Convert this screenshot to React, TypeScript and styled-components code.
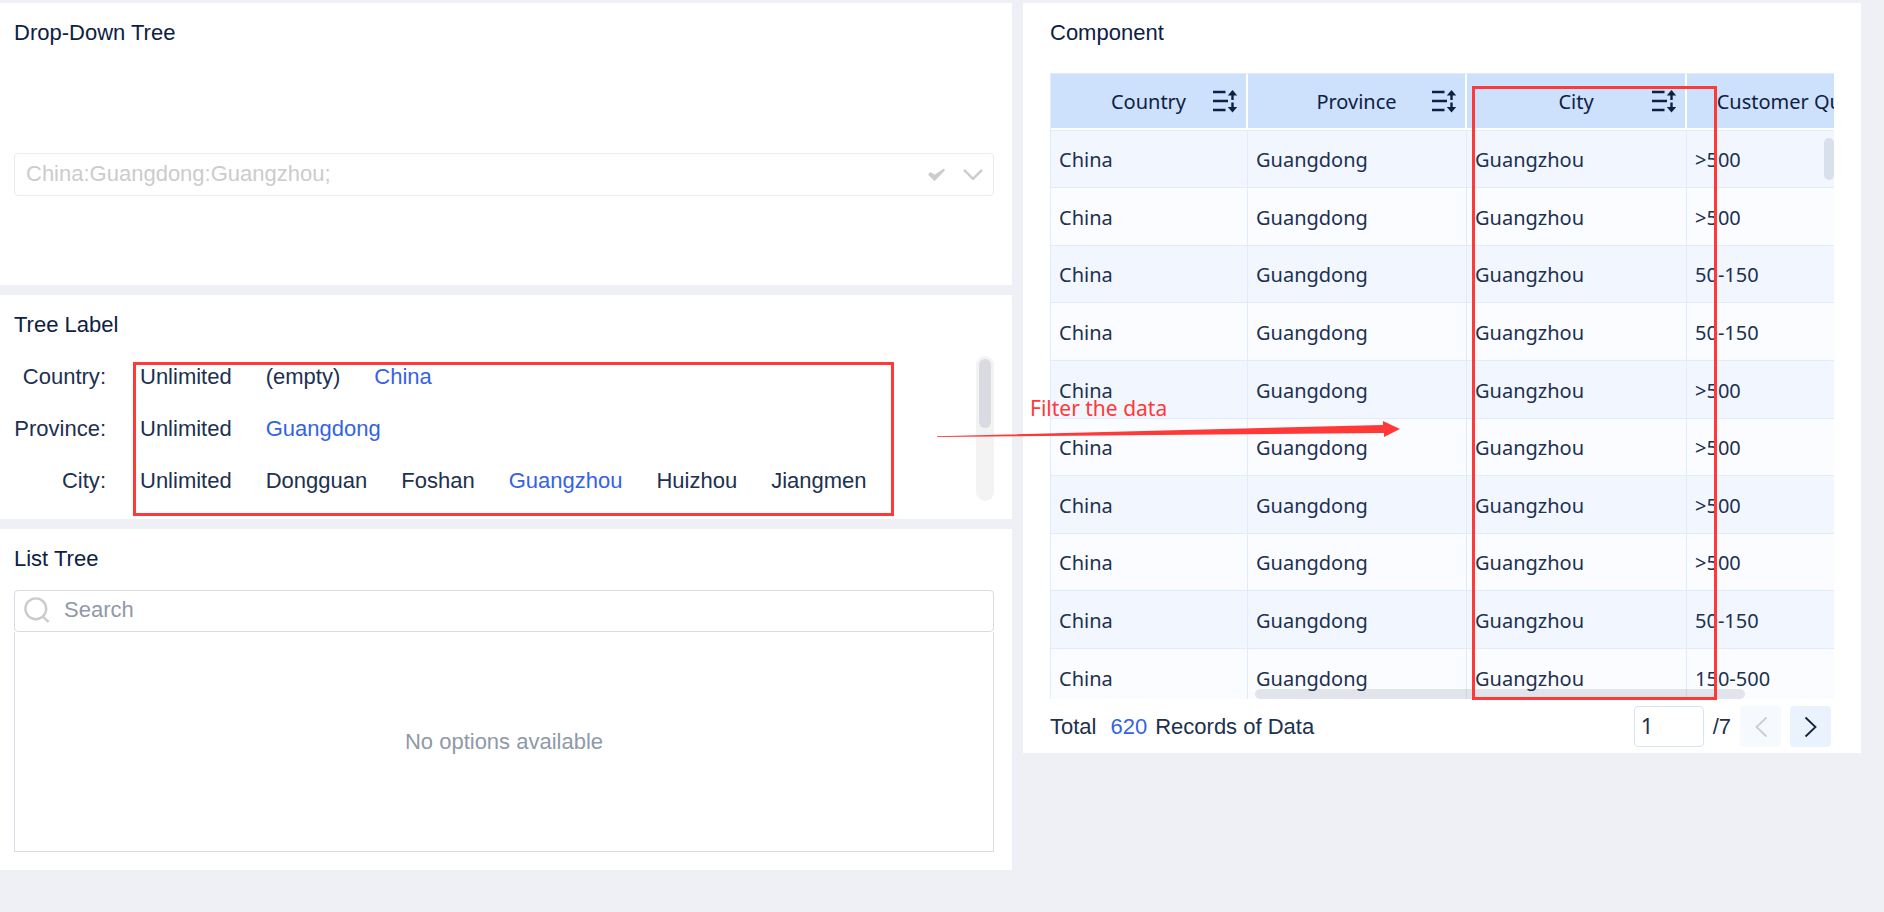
import React, { useState } from "react";
import styled, { createGlobalStyle } from "styled-components";

const sans = `"Liberation Sans", Arial, sans-serif`;
const humanist = `"Noto Sans", "Segoe UI", sans-serif`;

const ink = "#0d2144";
const softInk = "#20304f";
const blue = "#3463e4";
const red = "#ff3838";
const line = "#e0ebfc";
const frame = "#d9dce4";

const GlobalStyle = createGlobalStyle`
  *, *::before, *::after { box-sizing: border-box; }
  body {
    margin: 0;
    background: #eff0f5;
    color: ${softInk};
    font: 22px/26px ${sans};
  }
  button, input, select { font: inherit; color: inherit; }
`;

const Page = styled.main`
  display: grid;
  grid-template-columns: 1012fr 838fr;
  align-items: start;
  gap: 11px;
  padding: 3px 23px 24px 0;
`;

const Column = styled.div`
  display: flex;
  flex-direction: column;
  gap: 10px;
  min-width: 0;
`;

const Panel = styled.section<{ $minHeight: number; $flush?: boolean }>`
  display: flex;
  flex-direction: column;
  min-height: ${(p) => p.$minHeight}px;
  padding: 16px 18px ${(p) => (p.$flush ? 0 : 18)}px 14px;
  background: #fff;
`;

const TablePanel = styled.section`
  position: relative;
  min-width: 0;
  padding: 16px 27px 6px;
  background: #fff;
`;

const Title = styled.h2<{ $gap?: number }>`
  margin: 0 0 ${(p) => p.$gap ?? 18}px;
  color: ${ink};
  font-size: 22px;
  font-weight: 400;
  line-height: 27px;
`;

const Centered = styled.div`
  flex: 1;
  display: flex;
  align-items: center;
`;

const Combo = styled.div`
  flex: 1;
  display: flex;
  align-items: center;
  gap: 15px;
  height: 43px;
  padding: 0 9px 0 11px;
  border: 1px solid #ebecef;
  border-radius: 4px;
  color: #ccc;
`;

const ComboSelect = styled.select`
  flex: 1;
  min-width: 0;
  height: 30px;
  padding: 0 0 2px;
  border: 0;
  outline: 0;
  appearance: none;
  background: transparent;
  color: #ccc;
  opacity: 1;
`;

const TreeBody = styled.div`
  position: relative;
  display: flex;
  justify-content: space-between;
  height: 145px;
`;

const TreeRows = styled.div`
  display: flex;
  flex-direction: column;
  gap: 10px;
`;

const TreeRow = styled.div`
  display: flex;
  gap: 34px;
  line-height: 42px;
`;

const TreeName = styled.span`
  width: 92px;
  text-align: right;
  white-space: nowrap;
`;

const TreeOptions = styled.div`
  display: flex;
  gap: 34px;
`;

const TreeOption = styled.button<{ $active: boolean }>`
  padding: 0;
  border: 0;
  background: none;
  color: ${(p) => (p.$active ? blue : softInk)};
  line-height: 42px;
  white-space: nowrap;
  cursor: pointer;
`;

const Track = styled.div`
  width: 18px;
  padding: 3px;
  border-radius: 9px;
  background: #f3f3f3;
`;

const Thumb = styled.div`
  height: 69px;
  border-radius: 6px;
  background: #d9dbe0;
`;

const Highlight = styled.div<{ $left: number; $top: number; $width: number; $height: number }>`
  position: absolute;
  left: ${(p) => p.$left}px;
  top: ${(p) => p.$top}px;
  width: ${(p) => p.$width}px;
  height: ${(p) => p.$height}px;
  border: 3px solid ${red};
  pointer-events: none;
`;

const SearchBox = styled.label`
  display: flex;
  align-items: center;
  gap: 14px;
  height: 42px;
  padding: 0 9px 2px;
  border: 1px solid ${frame};
  border-radius: 4px;
  color: #ccc;
`;

const SearchInput = styled.input`
  flex: 1;
  min-width: 0;
  padding: 0;
  border: 0;
  outline: 0;
  background: none;
  color: ${softInk};
  &::placeholder { color: #8f99a8; opacity: 1; }
`;

const EmptyList = styled.div`
  flex: 1;
  display: flex;
  align-items: center;
  justify-content: center;
  border: 1px solid ${frame};
  border-top: 0;
  color: #8f99a8;
`;

const TableArea = styled.div`
  position: relative;
`;

const Viewport = styled.div`
  position: relative;
  height: 626px;
  overflow: hidden;
`;

const DataTable = styled.table`
  width: 877px;
  table-layout: fixed;
  border-spacing: 0;
  border-top: 1px solid ${line};
  border-left: 1px solid ${line};
  font: 20px/28px ${humanist};
`;

const HeadCell = styled.th`
  height: 56px;
  padding: 2px 0 0;
  border-right: 2px solid #fff;
  border-bottom: 2px solid #fff;
  background: #cde0fc;
  color: ${ink};
  font-weight: 400;
  white-space: nowrap;
`;

const HeadLayout = styled.div`
  display: grid;
  grid-template-columns: minmax(0, 1fr) auto minmax(0, 1fr);
  align-items: center;
`;

const SortButton = styled.button`
  grid-column: 3;
  justify-self: end;
  display: flex;
  margin-right: 8px;
  padding: 0 0 3px;
  border: 0;
  background: none;
  cursor: pointer;
`;

const HeadLabel = styled.span`
  grid-column: 2;
`;

const BodyRow = styled.tr`
  height: 58px;
  background: #fbfcff;
  &:nth-child(odd) { background: #f2f7ff; }
  &:nth-child(5n + 1), &:nth-child(5n + 3) { height: 57px; }
`;

const Cell = styled.td`
  padding: 2px 8px 0;
  border-top: 1px solid ${line};
  border-right: 1px solid ${line};
`;

const VerticalThumb = styled.div`
  position: absolute;
  top: 65px;
  right: 0;
  width: 10px;
  height: 42px;
  border-radius: 5px;
  background: rgba(20, 35, 70, 0.11);
`;

const HorizontalThumb = styled.div`
  position: absolute;
  bottom: 0;
  left: 205px;
  width: 490px;
  height: 10px;
  border-radius: 5px;
  background: rgba(20, 35, 70, 0.11);
`;

const Footer = styled.div`
  display: flex;
  align-items: center;
  justify-content: space-between;
  margin-top: 7px;
  padding-right: 3px;
`;

const Total = styled.div`
  display: flex;
  gap: 8px;
  white-space: nowrap;
`;

const Count = styled.span`
  padding-left: 6px;
  color: ${blue};
`;

const Pager = styled.div`
  display: flex;
  align-items: center;
  gap: 9px;
`;

const PageInput = styled.input`
  width: 70px;
  height: 41px;
  padding: 0 6px 3px;
  border: 1px solid #d5e4fb;
  border-radius: 4px;
  outline: 0;
  background: #fff;
  font-family: ${humanist};
`;

const PageButton = styled.button`
  display: grid;
  place-items: center;
  width: 41px;
  height: 41px;
  padding: 0;
  border: 0;
  border-radius: 4px;
  background: #eaf2fe;
  color: ${ink};
  &:disabled { background: #f6f9fe; color: #ccc; }
`;

const ArrowDrawing = styled.svg`
  position: absolute;
  left: -86px;
  top: 418px;
  pointer-events: none;
`;

const Note = styled.span`
  position: absolute;
  left: 7px;
  top: 391px;
  color: ${red};
  font: 21px/28px ${humanist};
  white-space: nowrap;
`;

const CheckIcon = () => (
  <svg width="20" height="16" viewBox="0 0 20 16" aria-hidden="true">
    <path d="M1 7.400 3.800 5l3.700 2.800L16.800 1.500l1.200 1.700L7.500 14.200z" fill="currentColor" />
  </svg>
);

const DownIcon = () => (
  <svg width="22" height="16" viewBox="0 0 22 16" fill="none" stroke="currentColor" strokeWidth="2.5" aria-hidden="true">
    <path d="m2 2.800 9 9 9-9" />
  </svg>
);

const SearchIcon = () => (
  <svg width="26" height="26" viewBox="0 0 26 26" fill="none" stroke="currentColor" strokeWidth="2.4" aria-hidden="true">
    <circle cx="11.8" cy="11.8" r="10.4" />
    <path d="m18.600 19.400 6 5.600" />
  </svg>
);

const SortIcon = () => (
  <svg width="26" height="24" viewBox="0 0 26 24" fill="none" stroke={ink} strokeWidth="2.4" aria-hidden="true">
    <path d="M1 3h12.500M1 12h15M1 21h12.500" />
    <path d="M20.500 4v7M20.500 13.500v7" />
    <path d="m15.800 6.500 4.700-5.500 4.700 5.500zM15.800 18l4.700 5.500 4.700-5.500z" fill={ink} stroke="none" />
  </svg>
);

const PageChevron = ({ back }: { back?: boolean }) => (
  <svg width="14" height="22" viewBox="0 0 14 22" fill="none" stroke="currentColor" strokeWidth="1.8" aria-hidden="true">
    <path d={back ? "M12.500 1.500 2.500 11l10 9.500" : "M1.500 1.500 11.500 11l-10 9.500"} />
  </svg>
);

const filters = [
  { name: "Country", options: ["Unlimited", "(empty)", "China"], initial: "China" },
  { name: "Province", options: ["Unlimited", "Guangdong"], initial: "Guangdong" },
  {
    name: "City",
    options: ["Unlimited", "Dongguan", "Foshan", "Guangzhou", "Huizhou", "Jiangmen"],
    initial: "Guangzhou",
  },
];

const columns = [
  { label: "Country", width: 197 },
  { label: "Province", width: 219 },
  { label: "City", width: 220 },
  { label: "Customer Quantity", width: 240 },
];

const quantities = [">500", ">500", "50-150", "50-150", ">500", ">500", ">500", ">500", "50-150", "150-500"];

function FilterRow({ name, options, initial }: (typeof filters)[number]) {
  const [selected, setSelected] = useState(initial);
  return (
    <TreeRow role="group" aria-label={name}>
      <TreeName>{name}:</TreeName>
      <TreeOptions>
        {options.map((option) => (
          <TreeOption
            key={option}
            type="button"
            $active={option === selected}
            aria-pressed={option === selected}
            onClick={() => setSelected(option)}
          >
            {option}
          </TreeOption>
        ))}
      </TreeOptions>
    </TreeRow>
  );
}

export default function App() {
  const [page, setPage] = useState(1);
  return (
    <>
      <GlobalStyle />
      <Page>
        <Column>
          <Panel $minHeight={282} $flush>
            <Title>Drop-Down Tree</Title>
            <Centered>
              <Combo>
                <ComboSelect aria-label="Drop-Down Tree">
                  <option>China:Guangdong:Guangzhou;</option>
                </ComboSelect>
                <CheckIcon />
                <DownIcon />
              </Combo>
            </Centered>
          </Panel>

          <Panel $minHeight={224}>
            <Title>Tree Label</Title>
            <TreeBody>
              <TreeRows>
                {filters.map((filter) => (
                  <FilterRow key={filter.name} {...filter} />
                ))}
              </TreeRows>
              <Track>
                <Thumb />
              </Track>
              <Highlight $left={119} $top={6} $width={761} $height={154} />
            </TreeBody>
          </Panel>

          <Panel $minHeight={341}>
            <Title>List Tree</Title>
            <SearchBox>
              <SearchIcon />
              <SearchInput type="text" placeholder="Search" aria-label="Search" />
            </SearchBox>
            <EmptyList>No options available</EmptyList>
          </Panel>
        </Column>

        <TablePanel>
          <Title $gap={27}>Component</Title>
          <TableArea>
            <Viewport>
              <DataTable>
                <colgroup>
                  {columns.map((column) => (
                    <col key={column.label} width={column.width} />
                  ))}
                </colgroup>
                <thead>
                  <tr>
                    {columns.map((column) => (
                      <HeadCell key={column.label} scope="col">
                        <HeadLayout>
                          <HeadLabel>{column.label}</HeadLabel>
                          <SortButton type="button" aria-label={`Sort by ${column.label}`}>
                            <SortIcon />
                          </SortButton>
                        </HeadLayout>
                      </HeadCell>
                    ))}
                  </tr>
                </thead>
                <tbody>
                  {quantities.map((quantity, index) => (
                    <BodyRow key={index}>
                      <Cell>China</Cell>
                      <Cell>Guangdong</Cell>
                      <Cell>Guangzhou</Cell>
                      <Cell>{quantity}</Cell>
                    </BodyRow>
                  ))}
                </tbody>
              </DataTable>
              <VerticalThumb />
              <HorizontalThumb />
            </Viewport>
            <Highlight $left={422} $top={13} $width={245} $height={614} />
          </TableArea>
          <Footer>
            <Total>
              <span>Total</span>
              <Count>620</Count>
              <span>Records of Data</span>
            </Total>
            <Pager>
              <PageInput
                type="text"
                aria-label="Page"
                value={page}
                onChange={(event) => setPage(Math.min(7, Math.max(1, Number(event.target.value) || 1)))}
              />
              <span>/7</span>
              <PageButton type="button" aria-label="Previous page" disabled={page === 1} onClick={() => setPage(page - 1)}>
                <PageChevron back />
              </PageButton>
              <PageButton type="button" aria-label="Next page" disabled={page === 7} onClick={() => setPage(page + 1)}>
                <PageChevron />
              </PageButton>
            </Pager>
          </Footer>
          <ArrowDrawing width="463" height="16" viewBox="0 0 463 16" aria-hidden="true">
            <path d="M0 15.300 446 4V0l17 8-16 8v-4L0 16z" fill={red} />
          </ArrowDrawing>
          <Note>Filter the data</Note>
        </TablePanel>
      </Page>
    </>
  );
}
